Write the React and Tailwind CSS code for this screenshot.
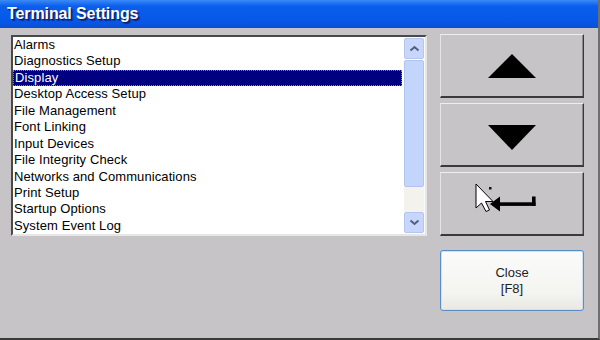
import React from 'react';

const items = [
    'Alarms',
    'Diagnostics Setup',
    'Display',
    'Desktop Access Setup',
    'File Management',
    'Font Linking',
    'Input Devices',
    'File Integrity Check',
    'Networks and Communications',
    'Print Setup',
    'Startup Options',
    'System Event Log',
];

const font = { fontFamily: '"Liberation Sans", Arial, sans-serif' };

function Chevron({ down }) {
    return (
        <svg width="11" height="7" viewBox="0 0 11 7">
            <path
                d={down ? 'M1.5 1.5 L5.5 5 L9.5 1.5' : 'M1.5 5.5 L5.5 2 L9.5 5.5'}
                fill="none"
                stroke="#4d6185"
                strokeWidth="2"
            />
        </svg>
    );
}

function PanelButton({ children }) {
    return (
        <button className="h-[64px] w-full bg-[#c6c4c6] border border-t-[#eeeeee] border-l-[#e4e4e4] border-r-[#3a3a3a] border-b-2 border-b-[#3a3a3a] shadow-[inset_-1px_0_0_#8a8a8a] p-0 flex items-center justify-center">
            {children}
        </button>
    );
}

export default function App() {
    return (
        <div
            className="w-[600px] h-[340px] bg-[#c6c4c6] flex flex-col border-r-2 border-r-[#6e6e6e] border-b-2 border-b-[#3a3a3a] overflow-hidden"
            style={font}
        >
            {/* title bar */}
            <div className="h-[28px] shrink-0 flex items-center pl-[7px] bg-[linear-gradient(to_bottom,#3a8af7_0%,#0b5eec_22%,#0758e8_75%,#0a4fd2_100%)]">
                <span className="text-white font-bold text-[16px] tracking-[-0.1px] [text-shadow:1px_1px_0_#0b1f6a,2px_2px_1px_#0b2a8a]">
                    Terminal Settings
                </span>
            </div>

            <div className="flex gap-[13px] pl-[11px] pt-[6px]">
                {/* list box */}
                <div className="mt-[1px] w-[416px] h-[201px] bg-white border-2 border-t-[#4a4a4a] border-l-[#4a4a4a] border-r-[#e6e6e6] border-b-[#e6e6e6] flex">
                    <div className="flex-1 text-[13px] tracking-[0.1px] text-black">
                        {items.map((it) => (
                            <div
                                key={it}
                                className={
                                    it === 'Display'
                                        ? 'h-[16.45px] pl-[1px] bg-[#000080] text-white border border-dotted border-[#7f7fc0] mr-[2px] leading-[14.45px]'
                                        : 'h-[16.45px] leading-[16.45px] pl-[1px] whitespace-nowrap'
                                }
                            >
                                {it}
                            </div>
                        ))}
                    </div>

                    {/* scrollbar */}
                    <div className="w-[21px] bg-[#fbfbf9] flex flex-col py-[1px] pr-[1px]">
                        <div className="h-[21px] rounded-[2px] bg-[#c8d6fb] border border-[#b4c6ee] flex items-center justify-center">
                            <Chevron />
                        </div>
                        <div className="mt-[1px] h-[127px] rounded-[2px] bg-[#c4d5fc] border border-[#b1c4ef]" />
                        <div className="flex-1 bg-[#f4f2ec]" />
                        <div className="h-[21px] rounded-[2px] bg-[#c8d6fb] border border-[#b4c6ee] flex items-center justify-center">
                            <Chevron down />
                        </div>
                    </div>
                </div>

                {/* right column */}
                <div className="w-[144px] flex flex-col gap-[5px]">
                    <PanelButton>
                        <svg width="140" height="60" viewBox="0 0 140 60">
                            <polygon points="70,18 94,42 46,42" fill="#000" />
                        </svg>
                    </PanelButton>
                    <PanelButton>
                        <svg width="140" height="60" viewBox="0 0 140 60">
                            <polygon points="46,20 94,20 70,45" fill="#000" />
                        </svg>
                    </PanelButton>
                    <PanelButton>
                        <svg width="140" height="60" viewBox="0 0 140 60">
                            {/* enter arrow */}
                            <rect x="56" y="28.3" width="37.5" height="3.6" fill="#000" />
                            <rect x="90" y="22.5" width="3.6" height="9.4" fill="#000" />
                            <polygon points="48,30 58,22.5 58,37.5" fill="#000" />
                            {/* mouse pointer */}
                            <polygon
                                points="34,10 34,34 39.5,29 44,37.5 47.5,36 43.5,27.5 51,27.5"
                                fill="#fff"
                                stroke="#000"
                                strokeWidth="1"
                                strokeLinejoin="miter"
                            />
                            <rect x="47" y="13" width="2.5" height="2.5" fill="#111" />
                        </svg>
                    </PanelButton>

                    <button className="mt-[9px] h-[61px] w-full rounded-[3px] border border-[#5b8ec6] bg-[linear-gradient(to_bottom,#fbfbfa_0%,#f4f4f1_70%,#e9e8e2_100%)] shadow-[inset_0_0_0_1px_#cfe0f4] flex flex-col items-center justify-center text-[13px] leading-[16px] text-[#1e1e1e]">
                        <span>Close</span>
                        <span>[F8]</span>
                    </button>
                </div>
            </div>
        </div>
    );
}
